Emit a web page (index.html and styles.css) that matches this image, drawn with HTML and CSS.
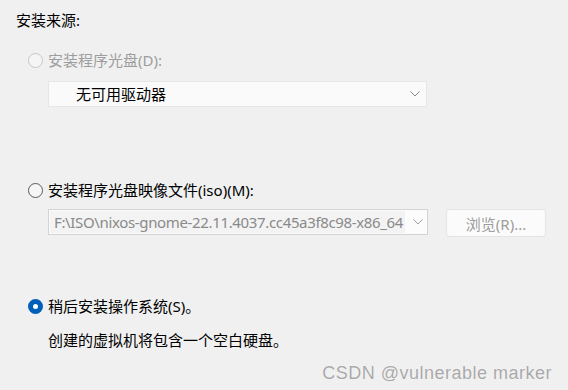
FILE: index.html
```html
<!DOCTYPE html>
<html lang="zh-CN">
<head>
  <meta charset="UTF-8">
  <meta name="viewport" content="width=device-width, initial-scale=1.0">
  <title>安装来源</title>
  <link rel="stylesheet" href="styles.css">
</head>
<body>

  <div class="pagina">
    <div class="titulo">安装来源:</div>

    <label class="opcion desactivada opcion-disco">
      <span class="radio"></span>安装程序光盘(D):
    </label>
    <div class="sangria">
      <div class="lista">
        <span class="lista-texto">无可用驱动器</span>
        <svg class="flecha" width="10" height="6" viewBox="0 0 10 6"><path d="M0.5 0.5 L5 5 L9.5 0.5" fill="none" stroke="#8a8a8a" stroke-width="1"/></svg>
      </div>
    </div>

    <label class="opcion opcion-iso">
      <span class="radio"></span>安装程序光盘映像文件(iso)(M):
    </label>
    <div class="sangria fila">
      <div class="combo">
        <span class="combo-texto">F:\ISO\nixos-gnome-22.11.4037.cc45a3f8c98-x86_64</span>
        <svg class="flecha" width="10" height="6" viewBox="0 0 10 6"><path d="M0.5 0.5 L5 5 L9.5 0.5" fill="none" stroke="#a0a0a0" stroke-width="1"/></svg>
      </div>
      <button class="boton">浏览(R)...</button>
    </div>

    <label class="opcion opcion-luego">
      <span class="radio marcada"></span>稍后安装操作系统(S)。
    </label>
    <div class="sangria nota">创建的虚拟机将包含一个空白硬盘。</div>

    <div class="marca">CSDN @vulnerable marker</div>
  </div>

</body>
</html>
```

FILE: styles.css
```css
body {
  margin: 0;
  background-color: #f0f0f0;
  color: #000;
  font-family: "Noto Sans", "Noto Sans CJK SC", sans-serif;
  font-size: 15px;
  line-height: 20px;
}
.pagina {
  padding-top: 10px;
}
.titulo {
  padding-left: 16px;
}
.opcion {
  display: flex;
  align-items: center;
  padding-left: 28px;
  height: 20px;
}
.opcion-disco {
  margin-top: 20px;
}
.opcion-iso {
  margin-top: 73px;
}
.opcion-luego {
  margin-top: 59px;
}
.desactivada {
  color: #9d9d9d;
}
.radio {
  width: 13px;
  height: 13px;
  border: 1px solid #5a5a5a;
  border-radius: 50%;
  background-color: #f6f6f6;
  margin-right: 5px;
  flex-shrink: 0;
}
.desactivada .radio {
  border-color: #c6c6c6;
  background-color: #f5f5f5;
}
.radio.marcada {
  width: 5px;
  height: 5px;
  border: 5px solid #005fb8;
  background-color: #fff;
}
.sangria {
  padding-left: 48px;
}
.lista {
  margin-top: 11px;
  height: 24px;
  border: 1px solid #e6e6e6;
  background-color: #fafafa;
  display: flex;
  align-items: center;
  justify-content: space-between;
  padding-left: 27px;
  padding-right: 6px;
  width: 344px;
}
.flecha {
  flex-shrink: 0;
}
.fila {
  display: flex;
  align-items: flex-start;
  margin-top: 9px;
}
.combo {
  width: 378px;
  height: 24px;
  border: 1px solid #d3d3d3;
  background-color: #fcfcfc;
  display: flex;
  align-items: center;
}
.combo-texto {
  display: block;
  width: 351px;
  margin-left: 1px;
  padding-left: 4px;
  height: 22px;
  line-height: 22px;
  overflow: hidden;
  white-space: nowrap;
  letter-spacing: -0.35px;
  background-color: #f3f3f3;
  color: #8a8a8a;
  flex-shrink: 0;
}
.combo .flecha {
  margin-left: 8px;
}
.boton {
  margin-left: 18px;
  width: 100px;
  height: 28px;
  border: 1px solid #e4e4e4;
  border-radius: 4px;
  background-color: #fbfbfb;
  color: #9d9d9d;
  font-family: "Noto Sans", "Noto Sans CJK SC", sans-serif;
  font-size: 15px;
  padding: 0;
}
.nota {
  margin-top: 14px;
}
.marca {
  margin-top: 13px;
  text-align: right;
  padding-right: 16px;
  font-family: "Liberation Sans", Arial, sans-serif;
  font-size: 18px;
  letter-spacing: 0.5px;
  color: #a9a9a9;
  text-shadow: 0 0 1px #fff;
}
```
